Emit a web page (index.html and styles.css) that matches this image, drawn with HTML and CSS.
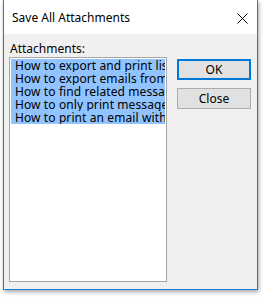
FILE: index.html
```html
<!DOCTYPE html>
<html>
<head>
<meta charset="utf-8">
<link rel="stylesheet" href="styles.css">
</head>
<body>
<div class="window">
  <div class="titlebar">
    <span class="title">Save All Attachments</span>
    <svg class="close-x" width="11" height="11" viewBox="0 0 11 11"><path d="M0.5 0.5 L10.5 10.5 M10.5 0.5 L0.5 10.5" stroke="#000" stroke-width="1" fill="none"/></svg>
  </div>
  <div class="client">
    <div class="label">Attachments:</div>
    <div class="main">
      <div class="listbox">
        <div class="item">How to export and print list of attachments</div>
        <div class="item">How to export emails from subfolders</div>
        <div class="item">How to find related messages</div>
        <div class="item">How to only print message header</div>
        <div class="item">How to print an email with small font</div>
      </div>
      <div class="buttons">
        <div class="btn btn-default">OK</div>
        <div class="btn">Close</div>
      </div>
    </div>
  </div>
</div>
</body>
</html>
```
FILE: styles.css
```css
html, body {
  margin: 0;
  padding: 0;
  background: #ffffff;
  width: 265px;
  height: 297px;
  overflow: hidden;
}
body {
  font-family: "Noto Sans", "Open Sans", sans-serif;
  font-size: 12px;
  color: #000;
}
.window {
  margin-left: 3px;
  width: 253px;
  height: 289px;
  border: 1px solid #1a7fd4;
  border-top: none;
  background: #f0f0f0;
  box-shadow: 1px 2px 4px rgba(0,0,0,0.35);
  display: flex;
  flex-direction: column;
}
.titlebar {
  height: 34px;
  background: #ffffff;
  display: flex;
  align-items: center;
  justify-content: space-between;
  padding: 0 9px 0 8px;
}
.title {
  font-size: 12px;
  color: #000;
  margin-top: 1px;
}
.close-x {
  display: block;
  margin-top: 2px;
}
.client {
  flex: 1;
  display: flex;
  flex-direction: column;
  padding: 7px 6px 7px 5px;
}
.label {
  line-height: 16px;
  height: 16px;
  padding-left: 1px;
}
.main {
  flex: 1;
  display: flex;
  gap: 10px;
}
.listbox {
  width: 156px;
  border: 1px solid #a5a5a5;
  background: #ffffff;
  padding: 1px;
  overflow: hidden;
}
.item {
  height: 13px;
  line-height: 13px;
  font-size: 12px;
  letter-spacing: 0.1px;
  background: #91c4ff;
  white-space: nowrap;
  overflow: hidden;
  padding-left: 4px;
}
.buttons {
  display: flex;
  flex-direction: column;
  gap: 8px;
  margin-top: 2px;
}
.btn {
  width: 72px;
  height: 19px;
  border: 1px solid #adadad;
  background: #e1e1e1;
  display: flex;
  align-items: center;
  justify-content: center;
  box-sizing: content-box;
}
.btn-default {
  width: 70px;
  height: 17px;
  border: 2px solid #0078d7;
}
```
